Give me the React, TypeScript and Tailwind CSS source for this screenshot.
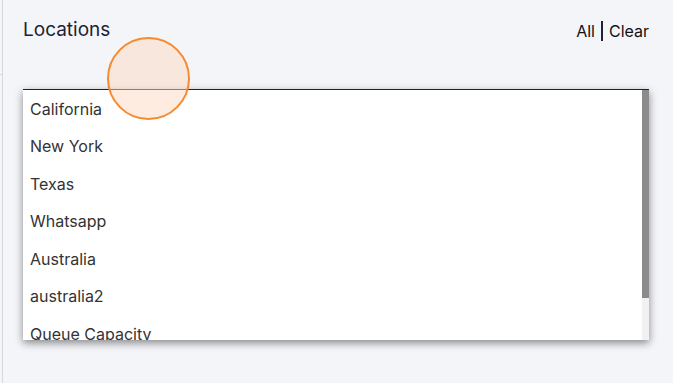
const locations = [
  "California",
  "New York",
  "Texas",
  "Whatsapp",
  "Australia",
  "australia2",
  "Queue Capacity",
];

export default function App() {
  return (
    <div
      className="relative flex h-[383px] w-[673px] overflow-hidden bg-[#f4f5f9]"
      style={{ fontFamily: "Inter, 'Liberation Sans', sans-serif" }}
    >
      {/* left panel edge */}
      <div className="flex w-[3px] flex-col border-r border-[#d6d8dc]">
        <div className="h-[75px] border-b border-[#d6d8dc]" />
      </div>

      <div className="flex flex-1 flex-col pl-5 pr-6">
        <div className="flex items-start justify-between pt-[18px]">
          <h2 className="text-[19px] leading-6 text-[#1d2330]">Locations</h2>
          <div className="mt-[3px] flex items-center text-[16px] leading-5 text-[#111]">
            <button>All</button>
            <span className="mx-[6px] h-[20px] w-[2px] bg-[#1d2330]" />
            <button>Clear</button>
          </div>
        </div>

        {/* dropdown list */}
        <div className="mt-[47px] flex h-[251px] border-t border-[#222] bg-white shadow-[0_3px_8px_rgba(0,0,0,0.45)]">
          <ul className="flex-1 overflow-hidden">
            {locations.map((loc) => (
              <li key={loc} className="flex h-[37.5px] shrink-0 items-center px-[7px] text-[16px] text-[#333]">
                {loc}
              </li>
            ))}
          </ul>
          <div className="flex w-[7px] flex-col bg-[#f1f1f1]">
            <div className="h-[208px] bg-[#8b8b8b]" />
          </div>
        </div>
      </div>

      {/* click indicator */}
      <div className="pointer-events-none absolute left-[107px] top-[37px] h-[83px] w-[83px] rounded-full border-2 border-[#f7892f] bg-[#fbd9bf]/50" />
    </div>
  );
}
